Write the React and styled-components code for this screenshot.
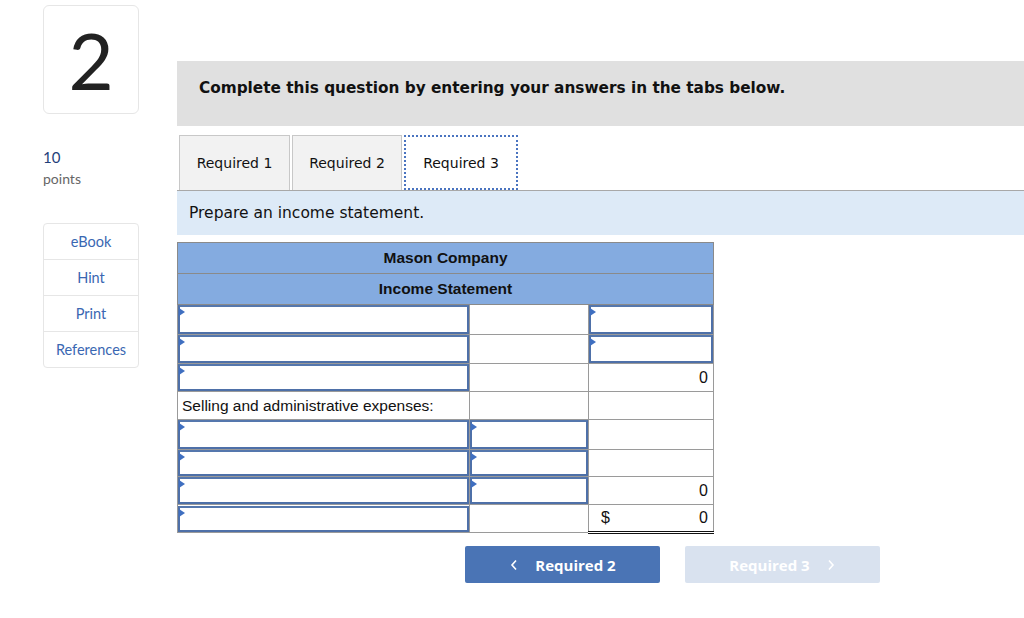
import React from "react";
import styled, { createGlobalStyle } from "styled-components";

const GlobalStyle = createGlobalStyle`
  body {
    margin: 0;
    background: #fff;
    font-family: "Open Sans", "Liberation Sans", sans-serif;
  }
`;

const Page = styled.div`
  display: flex;
  width: 1024px;
  height: 618px;
  overflow: hidden;
`;

const Side = styled.div`
  width: 96px;
  padding: 5px 38px 0 43px;
  flex-shrink: 0;
`;

const NumberBox = styled.div`
  height: 107px;
  border: 1px solid #e6e6e6;
  border-radius: 6px;
  display: flex;
  align-items: center;
  justify-content: center;
  font-family: "Lato", "Open Sans", sans-serif;
  font-weight: 400;
  font-size: 78px;
  color: #222;
`;

const Points = styled.div`
  margin-top: 33px;
  font-family: "Lato", sans-serif;
  line-height: 21px;
  font-size: 15px;
  color: #1f3f7a;
  span {
    display: block;
    color: #666;
    font-size: 14px;
  }
`;

const Menu = styled.div`
  margin-top: 34px;
  border: 1px solid #e6e6e6;
  border-radius: 4px;
`;

const MenuItem = styled.div`
  height: 35px;
  display: flex;
  align-items: center;
  justify-content: center;
  font-family: "Lato", sans-serif;
  font-size: 14.5px;
  color: #3a67b2;
  & + & {
    border-top: 1px solid #e6e6e6;
  }
`;

const Main = styled.div`
  flex: 1;
  padding-top: 61px;
`;

const Instruction = styled.div`
  height: 65px;
  box-sizing: border-box;
  background: #e0e0e0;
  padding: 18px 0 0 22px;
  font-family: "DejaVu Sans", Verdana, sans-serif;
  font-weight: bold;
  font-size: 15.3px;
  color: #111;
`;

const TabBar = styled.div`
  margin-top: 9px;
  display: flex;
  gap: 2px;
  padding-left: 2px;
  border-bottom: 1px solid #a8a8a8;
`;

const Tab = styled.div`
  width: ${(p) => p.w}px;
  height: 55px;
  box-sizing: border-box;
  display: flex;
  align-items: center;
  justify-content: center;
  font-family: "DejaVu Sans", Verdana, sans-serif;
  font-size: 14px;
  color: #111;
  background: ${(p) => (p.active ? "#fff" : "#f2f2f2")};
  border: ${(p) => (p.active ? "2px dotted #4a74c0" : "1px solid #c8c8c8")};
  border-bottom: ${(p) => (p.active ? "2px dotted #4a74c0" : "none")};
  margin-bottom: ${(p) => (p.active ? "-1px" : "0")};
`;

const Prompt = styled.div`
  height: 44px;
  box-sizing: border-box;
  background: #ddeaf7;
  padding: 13px 0 0 12px;
  font-family: "DejaVu Sans", Verdana, sans-serif;
  font-size: 15.5px;
  color: #111;
`;

const Table = styled.table`
  margin-top: 7px;
  width: 536px;
  table-layout: fixed;
  border-collapse: collapse;
  font-family: "Liberation Sans", Arial, sans-serif;
  font-size: 15.5px;
  color: #111;
  border: 1px solid #8a8a8a;
`;

const HeadCell = styled.td`
  height: 30px;
  padding: 0;
  background: #84abe0;
  text-align: center;
  font-weight: bold;
  border: 1px solid #8a8a8a;
`;

const Cell = styled.td`
  height: ${(p) => p.h}px;
  padding: 0 5px 0 4px;
  border: 1px solid #9a9a9a;
  border-top: ${(p) => (p.topRule ? "1px solid #111" : "1px solid #9a9a9a")};
  border-bottom: ${(p) => (p.dbl ? "3px double #111" : "1px solid #9a9a9a")};
  text-align: ${(p) => (p.num ? "right" : "left")};
  font-size: ${(p) => (p.num ? "16px" : "15.5px")};
  vertical-align: middle;
`;

const InputCell = styled.td`
  height: ${(p) => p.h}px;
  padding: 0;
  border: 1px solid #9a9a9a;
`;

const InputBox = styled.div`
  position: relative;
  height: ${(p) => p.h}px;
  box-sizing: border-box;
  border: 2px solid #4e70a8;
  border-top-color: #5577ad;
  background: #fff;
  &::before {
    content: "";
    position: absolute;
    top: 1px;
    left: -1px;
    border-left: 6px solid #3f6fc0;
    border-top: 4px solid transparent;
    border-bottom: 4px solid transparent;
  }
`;

const Dollar = styled.div`
  display: flex;
  justify-content: space-between;
  padding-left: 8px;
  font-size: 16px;
`;

const Nav = styled.div`
  margin-top: 12px;
  margin-left: 288px;
  display: flex;
  gap: 25px;
`;

const NavButton = styled.button`
  width: 195px;
  height: 37px;
  border: none;
  border-radius: 2px;
  background: ${(p) => (p.disabled ? "#d9e2ef" : "#4a74b5")};
  color: #fff;
  font-family: "Open Sans", sans-serif;
  font-weight: bold;
  font-size: 15px;
  display: flex;
  align-items: center;
  justify-content: center;
  gap: 16px;
  padding: 0;
  svg {
    width: 10px;
    height: 12px;
  }
`;

const Chevron = ({ dir }) => (
  <svg viewBox="0 0 10 12" fill="none" stroke="#fff" strokeWidth="1.6">
    {dir === "left" ? <path d="M7 1.5 L3 6 L7 10.5" /> : <path d="M3 1.5 L7 6 L3 10.5" />}
  </svg>
);

const Input = ({ h }) => (
  <InputCell h={h}>
    <InputBox h={h} />
  </InputCell>
);

// each row: col1, col2, col3 ("in" = entry box)
const rows = [
  { h: 29, c1: "in", c2: "", c3: "in" },
  { h: 28, c1: "in", c2: "", c3: "in" },
  { h: 27, c1: "in", c2: "", c3: "0", rule: true },
  { h: 27, c1: "Selling and administrative expenses:", c2: "", c3: "" },
  { h: 29, c1: "in", c2: "in", c3: "" },
  { h: 26, c1: "in", c2: "in", c3: "" },
  { h: 27, c1: "in", c2: "in", c3: "0" },
  { h: 26, c1: "in", c2: "", c3: "$0", rule: true, dbl: true },
];

const renderCell = (v, r, col) => {
  if (v === "in") return <Input key={col} h={r.h} />;
  if (v === "$0")
    return (
      <Cell key={col} h={r.h} topRule dbl>
        <Dollar>
          <span>$</span>
          <span>0</span>
        </Dollar>
      </Cell>
    );
  return (
    <Cell key={col} h={r.h} num={col === 3} topRule={col === 3 && r.rule}>
      {v}
    </Cell>
  );
};

const App = () => (
  <Page>
    <GlobalStyle />
    <Side>
      <NumberBox>2</NumberBox>
      <Points>
        10<span>points</span>
      </Points>
      <Menu>
        <MenuItem>eBook</MenuItem>
        <MenuItem>Hint</MenuItem>
        <MenuItem>Print</MenuItem>
        <MenuItem>References</MenuItem>
      </Menu>
    </Side>
    <Main>
      <Instruction>Complete this question by entering your answers in the tabs below.</Instruction>
      <TabBar>
        <Tab w={111}>Required 1</Tab>
        <Tab w={110}>Required 2</Tab>
        <Tab w={114} active>
          Required 3
        </Tab>
      </TabBar>
      <Prompt>Prepare an income statement.</Prompt>
      <Table>
        <colgroup>
          <col style={{ width: 292 }} />
          <col style={{ width: 119 }} />
          <col style={{ width: 125 }} />
        </colgroup>
        <tbody>
          <tr>
            <HeadCell colSpan={3}>Mason Company</HeadCell>
          </tr>
          <tr>
            <HeadCell colSpan={3}>Income Statement</HeadCell>
          </tr>
          {rows.map((r, i) => (
            <tr key={i}>
              {renderCell(r.c1, r, 1)}
              {renderCell(r.c2, r, 2)}
              {renderCell(r.c3, r, 3)}
            </tr>
          ))}
        </tbody>
      </Table>
      <Nav>
        <NavButton>
          <Chevron dir="left" />
          Required 2
        </NavButton>
        <NavButton disabled>
          Required 3
          <Chevron dir="right" />
        </NavButton>
      </Nav>
    </Main>
  </Page>
);

export default App;
